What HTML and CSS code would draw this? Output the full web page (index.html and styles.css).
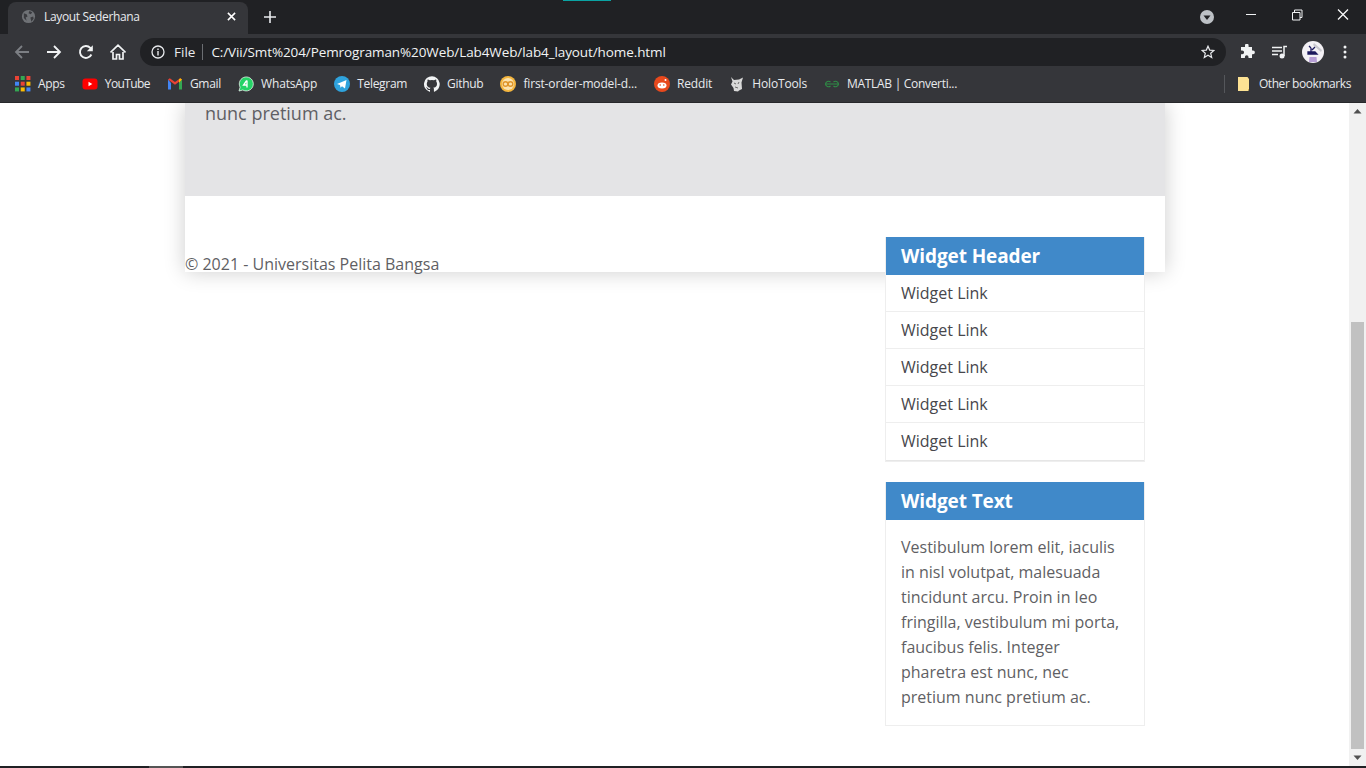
FILE: index.html
```html
<!DOCTYPE html>
<html lang="en">
<head>
<meta charset="utf-8">
<title>Layout Sederhana</title>
<link rel="stylesheet" href="styles.css">
</head>
<body>
<div class="browser">
  <header class="chrome">
    <div class="tabstrip">
      <div class="tab">
        <svg class="fav" viewBox="0 0 16 16"><circle cx="8" cy="8" r="7" fill="#6f7276"/><path d="M3 4.500l3 1 1 2.500-2 1 1 3.500-3-3zM9 2l3 1.500-1.500 2L8 4.500zM10 9l3-1 .5 2.500-2.500 3z" fill="#3a3b3f"/></svg>
        <span class="tab-title">Layout Sederhana</span>
        <svg class="tab-close" viewBox="0 0 10 10"><path d="M1 1l8 8M9 1l-8 8" stroke="#fff" stroke-width="1.700" fill="none"/></svg>
      </div>
      <svg class="newtab" viewBox="0 0 12 12"><path d="M6 0v12M0 6h12" stroke="#e8eaed" stroke-width="1.600" fill="none"/></svg>
      <div class="stripe"></div>
      <div class="strip-right">
        <svg class="profile-drop" viewBox="0 0 14 14"><circle cx="7" cy="7" r="7" fill="#bdc1c6"/><path d="M3.500 5.500h7L7 10z" fill="#202124"/></svg>
        <div class="winbtns">
          <svg class="winbtn" viewBox="0 0 46 30"><path d="M18 14.500h10" stroke="#f1f3f4" fill="none"/></svg>
          <svg class="winbtn" viewBox="0 0 46 30"><path d="M18.500 12.500h7.500v7.500h-7.500zM20.500 12.500v-2.500h7.500v7.500h-2" stroke="#f1f3f4" fill="none"/></svg>
          <svg class="winbtn" viewBox="0 0 46 30"><path d="M18 9.500l10 10M28 9.500l-10 10" stroke="#f8f9fa" stroke-width="1.300" fill="none"/></svg>
        </div>
      </div>
    </div>
    <div class="toolbar">
      <svg class="navicon" viewBox="0 0 16 16"><path d="M15 8H2M8 2L2 8l6 6" stroke="#7c7f84" stroke-width="1.800" fill="none"/></svg>
      <svg class="navicon" viewBox="0 0 16 16"><path d="M1 8h13M8 2l6 6-6 6" stroke="#f1f3f4" stroke-width="1.800" fill="none"/></svg>
      <svg class="navicon" viewBox="0 0 16 16"><path d="M13.400 10.500A6 6 0 1 1 12.300 3.800L14 5.500" stroke="#f1f3f4" stroke-width="1.900" fill="none"/><path d="M14.800 1.200v6h-6z" fill="#f1f3f4"/></svg>
      <svg class="navicon" viewBox="0 0 16 16"><path d="M3 8v7h3.500v-4.500h3V15H13V8M0.500 8.500L8 1.200l7.500 7.300" stroke="#f1f3f4" stroke-width="1.700" fill="none"/></svg>
      <div class="omnibox">
        <svg class="info" viewBox="0 0 14 14"><circle cx="7" cy="7" r="6" stroke="#e8eaed" stroke-width="1.300" fill="none"/><path d="M7 6v4.500M7 3.500v1.400" stroke="#e8eaed" stroke-width="1.400" fill="none"/></svg>
        <span class="scheme">File</span>
        <span class="omni-sep"></span>
        <span class="url">C:/Vii/Smt%204/Pemrograman%20Web/Lab4Web/lab4_layout/home.html</span>
        <svg class="star" viewBox="0 0 14 14"><path d="M7 1.200l1.700 3.900 4.200.4-3.200 2.800 1 4.100L7 10.200l-3.700 2.200 1-4.100L1.100 5.500l4.200-.4z" stroke="#e8eaed" stroke-width="1.200" fill="none"/></svg>
      </div>
      <div class="tool-right">
        <svg class="tool-puzzle" viewBox="0 0 16 16"><path d="M6 1.500a1.800 1.800 0 0 1 3.600 0V3h3.400v3.400h1a1.900 1.900 0 0 1 0 3.800h-1V14H9.500v-1a1.800 1.800 0 0 0-3.600 0v1H2v-3.800h1.200a1.900 1.900 0 0 0 0-3.800H2V3h4z" fill="#f1f3f4"/></svg>
        <svg class="tool-media" viewBox="0 0 16 14"><path d="M0 2.500h10M0 6h10M0 9.500h6" stroke="#f1f3f4" stroke-width="1.400" fill="none"/><path d="M12 11V1.500h3" stroke="#f1f3f4" stroke-width="1.500" fill="none"/><circle cx="10" cy="11" r="2.500" fill="#f1f3f4"/></svg>
        <svg class="avatar" viewBox="0 0 22 22"><circle cx="11" cy="11" r="11" fill="#f3f1f5"/><path d="M12 2l8 7-1 2-8-7z" fill="#c9c9cf"/><path d="M7 21l.5-5h7l.5 5z" fill="#b79fd6"/><path d="M6 11h7l2 2H6zM9 11V7M7 5l2 2M13 6l-3 3" stroke="#1d1a5e" stroke-width="1.300" fill="#1d1a5e"/></svg>
        <svg class="tool-menu" viewBox="0 0 4 14"><circle cx="2" cy="2" r="1.500" fill="#f1f3f4"/><circle cx="2" cy="7" r="1.500" fill="#f1f3f4"/><circle cx="2" cy="12" r="1.500" fill="#f1f3f4"/></svg>
      </div>
    </div>
    <nav class="bookmarks">
      <a class="bm"><svg class="bm-ic" viewBox="0 0 14 14"><path d="M0 0h3.500v3.500H0z" fill="#ea4335"/><path d="M5 0h3.500v3.500H5z" fill="#34a853"/><path d="M10 0h3.500v3.500H10z" fill="#ea4335"/><path d="M0 5h3.500v3.500H0z" fill="#4285f4"/><path d="M5 5h3.500v3.500H5z" fill="#ea4335"/><path d="M10 5h3.500v3.500H10z" fill="#fbbc04"/><path d="M0 10h3.500v3.500H0z" fill="#34a853"/><path d="M5 10h3.500v3.500H5z" fill="#fbbc04"/><path d="M10 10h3.500v3.500H10z" fill="#4285f4"/></svg><span>Apps</span></a>
      <a class="bm ls-tight"><svg class="bm-ic" viewBox="0 0 16 16"><rect x="0.500" y="2.500" width="15" height="11" rx="3" fill="#f00"/><path d="M6.500 5.800v4.400L10.300 8z" fill="#fff"/></svg><span>YouTube</span></a>
      <a class="bm"><svg class="bm-ic" viewBox="0 0 16 16"><path d="M1 3.500v10h3V7z" fill="#4285f4"/><path d="M15 3.500v10h-3V7z" fill="#34a853"/><path d="M1 3.500L8 8.800l7-5.300-1.800-1.300L8 6 2.800 2.200z" fill="#ea4335"/><path d="M12 7l3-3.500-1.800-1.300L12 3.200z" fill="#fbbc04"/></svg><span>Gmail</span></a>
      <a class="bm ls-loose"><svg class="bm-ic" viewBox="0 0 16 16"><path d="M1 15l1.100-3.800A7 7 0 1 1 4.800 14z" fill="#25d366" stroke="#fff" stroke-width="0.700"/><path d="M8.700 4.500L5.500 9h4M9 4.500V11.500" stroke="#fff" stroke-width="1.300" fill="none"/></svg><span>WhatsApp</span></a>
      <a class="bm"><svg class="bm-ic" viewBox="0 0 16 16"><circle cx="8" cy="8" r="8" fill="#2fa3dd"/><path d="M3 8l9.500-4-1.500 8.500-3-2.200-1.500 1.500-.5-2.800z" fill="#fff"/></svg><span>Telegram</span></a>
      <a class="bm"><svg class="bm-ic" viewBox="0 0 16 16"><path d="M8 .2a8 8 0 0 0-2.500 15.600c.4.100.5-.2.500-.4v-1.400c-2.200.5-2.700-1-2.700-1-.4-.9-.9-1.200-.9-1.200-.7-.5.100-.5.100-.5.800.100 1.200.8 1.200.8.700 1.200 1.900.9 2.300.7.100-.5.300-.9.500-1.100-1.800-.2-3.700-.9-3.700-4 0-.9.300-1.600.8-2.100-.1-.2-.4-1 .1-2.100 0 0 .7-.2 2.200.8a7.500 7.500 0 0 1 4 0c1.500-1 2.200-.8 2.200-.8.400 1.100.2 1.900.1 2.100.5.600.8 1.300.8 2.100 0 3.100-1.900 3.700-3.700 3.900.3.300.6.700.6 1.500v2.200c0 .2.100.5.600.4A8 8 0 0 0 8 .2z" fill="#f1f3f4"/></svg><span>Github</span></a>
      <a class="bm ls-loose"><svg class="bm-ic" viewBox="0 0 16 16"><circle cx="8" cy="8" r="8" fill="#f4b63f"/><circle cx="8" cy="8" r="6" fill="#fbe3ae"/><circle cx="5.500" cy="8" r="2.300" stroke="#e0952a" stroke-width="1.400" fill="none"/><circle cx="10.500" cy="8" r="2.300" stroke="#e0952a" stroke-width="1.400" fill="none"/></svg><span>first-order-model-d...</span></a>
      <a class="bm ls-loose"><svg class="bm-ic" viewBox="0 0 16 16"><circle cx="8" cy="8" r="8" fill="#e8491d"/><ellipse cx="8" cy="9.500" rx="4.500" ry="3" fill="#fff"/><circle cx="6.200" cy="9" r="0.800" fill="#e8491d"/><circle cx="9.800" cy="9" r="0.800" fill="#e8491d"/><circle cx="11.500" cy="4" r="1" fill="#fff"/></svg><span>Reddit</span></a>
      <a class="bm ls-loose"><svg class="bm-ic" viewBox="0 0 16 16"><path d="M2 1l3 3 5-.5 4-2-1.500 5L13 13l-3 1.500-1 1-4-.5-.5-3L2 8.500l1.500-3z" fill="#d9d9d9"/><path d="M5 7l2 1M10 6l-1 2M6 11l3 1" stroke="#6b6b6b" fill="none"/></svg><span>HoloTools</span></a>
      <a class="bm"><svg class="bm-ic" viewBox="0 0 16 16"><path d="M8 8H1.500a3 3 0 0 1 5-2M8 8h6.500a3 3 0 0 0-5-2M1.500 8a3 3 0 0 0 5 2M14.500 8a3 3 0 0 1-5 2" stroke="#2f8d46" stroke-width="1.100" fill="none"/></svg><span>MATLAB | Converti...</span></a>
      <div class="bm-end">
        <span class="bm-sep"></span>
        <a class="bm ls-other"><svg class="bm-ic" viewBox="0 0 16 16"><path d="M2 1h9.500L13 3v11l-1 1H2z" fill="#fde293"/><path d="M12 15v-2h1z" fill="#c9a93f"/></svg><span>Other bookmarks</span></a>
      </div>
    </nav>
  </header>
  <div class="viewport">
    <main class="page">
      <div class="wrap">
        <section class="content">
          <p>nunc pretium ac.</p>
        </section>
        <div class="bottom-row">
          <footer class="foot">© 2021 - Universitas Pelita Bangsa</footer>
          <aside class="sidebar">
            <div class="widget">
              <h3 class="widget-title">Widget Header</h3>
              <ul class="widget-list">
                <li>Widget Link</li>
                <li>Widget Link</li>
                <li>Widget Link</li>
                <li>Widget Link</li>
                <li>Widget Link</li>
              </ul>
            </div>
            <div class="widget">
              <h3 class="widget-title">Widget Text</h3>
              <p class="widget-text">Vestibulum lorem elit, iaculis in nisl volutpat, malesuada tincidunt arcu. Proin in leo fringilla, vestibulum mi porta, faucibus felis. Integer pharetra est nunc, nec pretium nunc pretium ac.</p>
            </div>
          </aside>
        </div>
      </div>
    </main>
    <div class="scrollbar">
      <svg class="arrow" viewBox="0 0 17 17"><path d="M4.500 10.500h8L8.500 6z" fill="#505050"/></svg>
      <div class="track"><div class="thumb"></div></div>
      <svg class="arrow" viewBox="0 0 17 17"><path d="M4.500 6.500h8L8.500 11z" fill="#505050"/></svg>
    </div>
  </div>
  <div class="taskbar-edge"><div class="taskbar-mark"></div></div>
</div>
</body>
</html>
```

FILE: styles.css
```css
* { box-sizing: border-box; }
html, body { margin: 0; padding: 0; height: 100%; overflow: hidden; background: #fff; }
body { font-family: "Open Sans", "Noto Sans", sans-serif; }
.browser { width: 1366px; height: 768px; display: flex; flex-direction: column; }

.chrome { height: 103px; flex: none; background: #35363a; border-bottom: 1px solid #27282b; color: #e8eaed; font-size: 12px; position: relative; z-index: 1; }
.tabstrip { height: 34px; background: #202124; display: flex; align-items: flex-end; padding-left: 8px; position: relative; }
.tab { width: 240px; height: 32px; background: #35363a; border-radius: 8px 8px 0 0; display: flex; align-items: center; padding: 0 11px 4px 13px; }
.fav { width: 15px; height: 15px; flex: none; }
.tab-title { margin-left: 8px; flex: 1; color: #e8eaed; letter-spacing: -0.35px; }
.tab-close { width: 9px; height: 9px; flex: none; margin-right: 1px; }
.newtab { width: 12px; height: 12px; margin: 0 0 11px 16px; flex: none; }
.stripe { position: absolute; left: 563px; top: 0; width: 48px; height: 1px; background: #0aa3a3; }
.strip-right { margin-left: auto; align-self: flex-start; display: flex; align-items: flex-start; }
.profile-drop { width: 14px; height: 14px; margin: 10px 14px 0 0; }
.winbtns { display: flex; }
.winbtn { width: 46px; height: 30px; }

.toolbar { height: 32px; display: flex; align-items: center; padding: 4px 0 0 14px; }
.navicon { width: 16px; height: 16px; flex: none; margin-right: 16px; }
.omnibox { width: 1086px; height: 28px; margin-left: -2px; background: #202124; border-radius: 14px; display: flex; align-items: center; padding: 0 11px; font-size: 13.500px; flex: none; }
.info { width: 14px; height: 14px; flex: none; }
.scheme { margin-left: 9px; color: #e8eaed; }
.omni-sep { width: 1px; height: 16px; background: #6b6e72; margin: 0 8px 0 7px; }
.url { flex: 1; color: #f1f3f4; letter-spacing: -0.1px; white-space: nowrap; }
.star { width: 14px; height: 14px; flex: none; }
.tool-right { flex: 1; display: flex; align-items: center; padding-left: 13px; }
.tool-puzzle { width: 16px; height: 16px; flex: none; }
.tool-media { width: 16px; height: 14px; flex: none; margin-left: 17px; }
.avatar { width: 22px; height: 22px; flex: none; margin-left: 14px; }
.tool-menu { width: 4px; height: 14px; flex: none; margin-left: 19px; }

.bookmarks { height: 36px; display: flex; align-items: center; padding: 0 0 1px 7px; white-space: nowrap; letter-spacing: -0.3px; }
.bm { display: flex; align-items: center; padding: 0 8px; margin-right: 1px; color: #e8eaed; }
.ls-tight { letter-spacing: -0.6px; }
.ls-loose { letter-spacing: -0.15px; }
.ls-other { letter-spacing: -0.43px; }
.bm-ic { width: 16px; height: 16px; flex: none; margin-right: 7px; }
.bm-end { margin-left: auto; display: flex; align-items: center; padding-right: 6px; }
.bm-sep { width: 1px; height: 18px; background: #55575b; margin-right: 3px; }

.viewport { flex: 1; min-height: 0; display: flex; background: #fff; }
.page { flex: 1; min-width: 0; color: #5f5f64; }
.wrap { width: 980px; height: 169px; margin-left: 185px; background: #fff; box-shadow: 0 0 20px rgba(0, 0, 0, 0.2); }
.content { height: 93px; background: #e4e4e6; padding: 0 20px; }
.content p { margin: 0; font-size: 18px; line-height: 20px; }
.bottom-row { height: 76px; display: flex; justify-content: space-between; align-items: flex-start; }
.foot { font-size: 16px; line-height: 22px; margin-top: 57px; }
.sidebar { width: 260px; margin: 41px 20px 0 0; flex: none; position: relative; }

.widget { border: 1px solid #eee; border-top: 0; background: #fff; margin-bottom: 20px; }
.widget-title { margin: 0; height: 38px; background: #4089c9; color: #fff; font-size: 19px; font-weight: 700; letter-spacing: -0.1px; line-height: 38px; padding-left: 15px; }
.widget-list { list-style: none; margin: 0; padding: 0; border-bottom: 1px solid #e6e6e6; color: #47474c; }
.widget-list li { height: 37px; line-height: 36px; font-size: 16px; padding-left: 15px; border-bottom: 1px solid #eee; }
.widget-list li:last-child { border-bottom: 0; }
.widget-text { margin: 0; padding: 15px; font-size: 16px; line-height: 25px; color: #5f5f64; }

.scrollbar { width: 17px; flex: none; background: #f1f1f1; display: flex; flex-direction: column; }
.arrow { width: 17px; height: 17px; flex: none; display: block; }
.track { flex: 1; display: flex; flex-direction: column; justify-content: flex-end; padding: 0 2px 0; }
.thumb { height: 427px; background: #c1c1c1; }
.taskbar-edge { height: 2px; flex: none; background: #202124; padding-left: 149px; }
.taskbar-mark { width: 34px; height: 2px; background: #555; }
```
